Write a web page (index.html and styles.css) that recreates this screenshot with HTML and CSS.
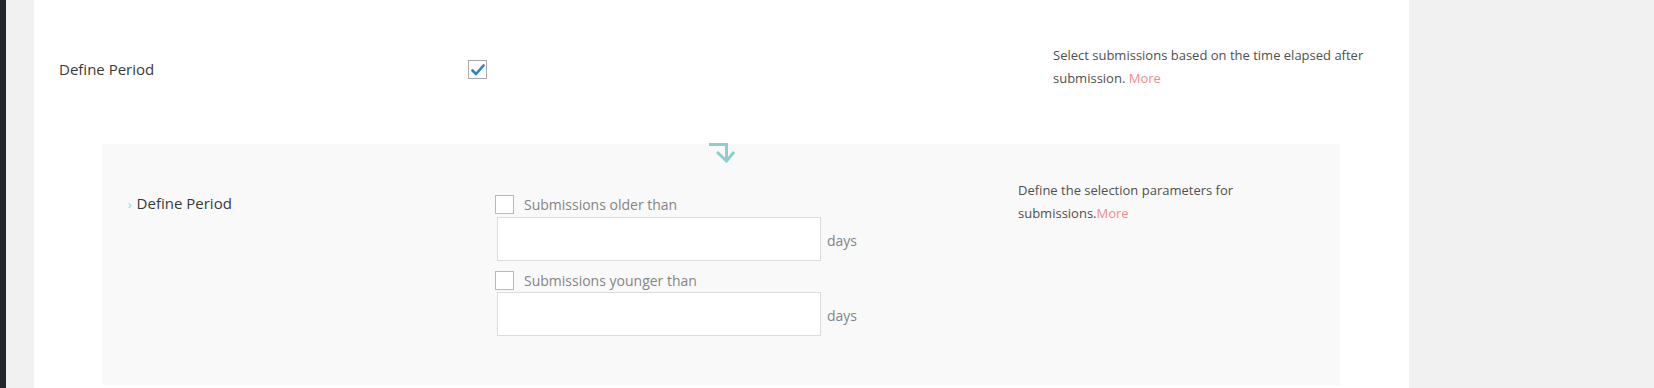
FILE: index.html
```html
<!DOCTYPE html>
<html>
<head>
<meta charset="utf-8">
<link rel="stylesheet" href="styles.css">
</head>
<body>
<div class="layout">
  <div class="sidebar"></div>
  <div class="gutter"></div>
  <main class="panel">
    <div class="row">
      <div class="label">Define Period</div>
      <div class="field">
        <span class="checkbox checked">
          <svg width="14" height="12" viewBox="0 0 14 12"><polyline points="1.5,6.5 5,10 12.5,1.5" fill="none" stroke="#2a84c9" stroke-width="2.6" stroke-linecap="round" stroke-linejoin="round"/></svg>
        </span>
      </div>
      <div class="desc">
        <span class="line">Select submissions based on the time elapsed after</span>
        <span class="line">submission. <a class="more">More</a></span>
      </div>
    </div>
    <section class="sub">
      <svg class="turn" width="26" height="20" viewBox="0 0 26 20"><path d="M0 1.5 H17.5 V17" fill="none" stroke="#8ecfcd" stroke-width="3"/><polyline points="8,9 17.5,18 25,9" fill="none" stroke="#8ecfcd" stroke-width="3"/></svg>
      <div class="sub-label"><span class="chev">›</span>Define Period</div>
      <div class="sub-fields">
        <label class="opt"><span class="checkbox"></span><span class="opt-text">Submissions older than</span></label>
        <div class="input-row"><div class="input"></div><span class="unit">days</span></div>
        <label class="opt opt2"><span class="checkbox"></span><span class="opt-text">Submissions younger than</span></label>
        <div class="input-row"><div class="input"></div><span class="unit">days</span></div>
      </div>
      <div class="sub-desc">
        <span class="line">Define the selection parameters for</span>
        <span class="line">submissions.<a class="more">More</a></span>
      </div>
    </section>
  </main>
  <div class="rest"></div>
</div>
</body>
</html>
```
FILE: styles.css
```css
html, body {
  margin: 0;
  padding: 0;
  height: 100%;
}
body {
  font-family: "Open Sans", "Noto Sans", sans-serif;
  font-size: 14px;
  color: #333;
  background: #f1f1f1;
}
.layout {
  display: flex;
  height: 388px;
  overflow: hidden;
}
.sidebar {
  width: 6px;
  background: #21272c;
  flex: none;
}
.gutter {
  width: 28px;
  background: #f1f1f1;
  flex: none;
}
.panel {
  width: 1375px;
  flex: none;
  background: #fff;
  display: flex;
  flex-direction: column;
}
.rest {
  flex: 1;
  background: #f1f1f1;
}
.row {
  display: grid;
  grid-template-columns: 409px 585px 330px;
  padding: 44px 0 0 25px;
  height: 100px;
  box-sizing: border-box;
}
.label {
  margin-top: 14px;
  line-height: 22px;
  font-size: 15px;
  color: #3a3a3a;
}
.field {
  margin-top: 16px;
}
.checkbox {
  display: inline-flex;
  align-items: center;
  justify-content: center;
  width: 19px;
  height: 19px;
  box-sizing: border-box;
  border: 1px solid #b9b9b9;
  background: #fff;
  flex: none;
}
.checkbox.checked {
  border-color: #a9a9a9;
}
.desc, .sub-desc {
  font-size: 13px;
  line-height: 23px;
  color: #505050;
  display: flex;
  flex-direction: column;
}
.line {
  display: block;
  white-space: nowrap;
}
.more {
  color: #f28d90;
  cursor: pointer;
}
.sub {
  position: relative;
  margin: 44px 69px 3px 68px;
  flex: 1;
  background: #f9f9f9;
  display: grid;
  grid-template-columns: 367px 523px 260px;
  align-items: start;
  padding: 0 0 0 26px;
}
.turn {
  position: absolute;
  left: 607px;
  top: -1px;
}
.sub-label {
  margin-top: 48px;
  line-height: 22px;
  font-size: 15px;
  color: #3a3a3a;
}
.chev {
  color: #8ecfcd;
  font-size: 12px;
  margin-right: 5px;
}
.sub-fields {
  margin-top: 51px;
  display: flex;
  flex-direction: column;
}
.opt {
  display: flex;
  align-items: center;
  height: 19px;
}
.opt2 {
  margin-top: 10px;
}
.opt-text {
  margin-left: 10px;
  color: #858585;
  line-height: 19px;
}
.input-row {
  display: flex;
  align-items: center;
  margin-top: 3px;
  padding-left: 2px;
}
.opt2 + .input-row {
  margin-top: 2px;
}
.input {
  width: 324px;
  height: 44px;
  box-sizing: border-box;
  border: 1px solid #dcdcdc;
  background: #fff;
}
.unit {
  margin-left: 6px;
  color: #858585;
  margin-top: 3px;
}
.sub-desc {
  margin-top: 35px;
}
```
